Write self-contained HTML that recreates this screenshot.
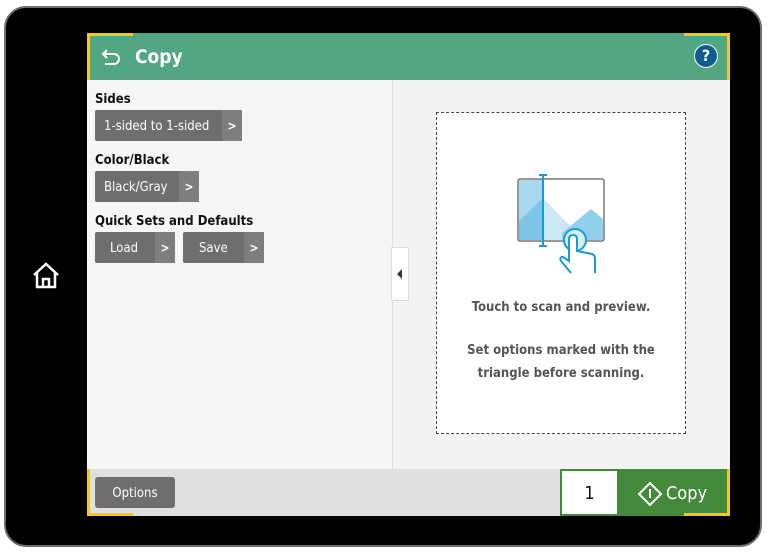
<!DOCTYPE html>
<html><head><style>
*{margin:0;padding:0;box-sizing:border-box}
body{width:768px;height:552px;background:#fff;position:relative;overflow:hidden;font-family:"DejaVu Sans Condensed","Liberation Sans",sans-serif}
.dev{position:absolute;left:4px;top:6px;width:758px;height:541px;background:#000;border-radius:22px;border:2px solid #6a6e72}
.scr{position:absolute;left:87px;top:33px;width:643px;height:483px;background:#f5f5f5;overflow:hidden}
.hdr{position:absolute;left:0;top:0;width:643px;height:47px;background:#52a681}
.hdr .t{position:absolute;left:48px;top:13px;color:#fff;font-size:19px;font-weight:bold}
.lbl{position:absolute;left:8px;font-size:13px;font-weight:bold;color:#111}
.btn{position:absolute;height:31px;background:#6e6e6e;color:#fff;font-size:13px;border-radius:2px;line-height:33px}
.btn .a{position:absolute;right:0;top:0;width:20px;height:31px;background:#7e7e7e;text-align:center;font-weight:bold;font-size:12px}
.y{position:absolute;background:#f5c722}
.pv{position:absolute;left:349px;top:79px;width:250px;height:322px;border:1px dashed #444;background:#fff}
.pv p{position:absolute;width:100%;text-align:center;color:#555;font-weight:bold;font-size:13px;line-height:23px}
</style></head><body>
<div class="dev"></div>
<svg style="position:absolute;left:31px;top:261px" width="30" height="28" viewBox="0 0 30 28"><path d="M3 14 L15 3 L27 14 M6 12 V26 H24 V12 M12 26 V18 H18 V26" fill="none" stroke="#fff" stroke-width="2.5"/></svg>
<div class="scr">
 <div class="hdr">
  <svg style="position:absolute;left:14px;top:15px" width="20" height="18" viewBox="0 0 20 18"><path d="M6 2 L2 6 L6 10 M2 6 H13 A5 5 0 0 1 13 16 H4" fill="none" stroke="#fff" stroke-width="2"/></svg>
  <div class="t">Copy</div>
  <div style="position:absolute;left:607px;top:11px;width:24px;height:24px;border-radius:50%;background:#0e5d8c;border:1.5px solid #fff;color:#fff;font-weight:bold;font-size:16px;text-align:center;line-height:21px">?</div>
 </div>
 <div style="position:absolute;left:0;top:47px;width:305px;height:389px;background:#f6f6f6"></div>
 <div style="position:absolute;left:305px;top:47px;width:338px;height:389px;background:#f3f3f3;border-left:1px solid #ddd"></div>
 <div style="position:absolute;left:304px;top:214px;width:18px;height:54px;background:#fff;border:1px solid #ddd"></div>
 <div style="position:absolute;left:310px;top:236px;width:0;height:0;border-top:5px solid transparent;border-bottom:5px solid transparent;border-right:5px solid #333"></div>
 <div class="lbl" style="top:59px">Sides</div>
 <div class="btn" style="left:8px;top:77px;width:147px;padding-left:9px">1-sided to 1-sided<span class="a">&gt;</span></div>
 <div class="lbl" style="top:120px">Color/Black</div>
 <div class="btn" style="left:8px;top:138px;width:104px;padding-left:9px">Black/Gray<span class="a">&gt;</span></div>
 <div class="lbl" style="top:181px">Quick Sets and Defaults</div>
 <div class="btn" style="left:8px;top:199px;width:80px;padding-left:15px">Load<span class="a">&gt;</span></div>
 <div class="btn" style="left:96px;top:199px;width:81px;padding-left:16px">Save<span class="a">&gt;</span></div>
 <div class="pv">
  <svg style="position:absolute;left:80px;top:60px" width="90" height="102" viewBox="0 0 90 102">
   <rect x="1" y="6" width="86" height="62" rx="2" fill="#fff" stroke="#777" stroke-width="1.5"/>
   <rect x="2" y="7" width="24" height="60" fill="#a8d8ee"/>
   <path d="M26 25 L60 60 L60 67 L26 67Z" fill="#cbe8f4"/>
   <path d="M2 48 L26 25 L26 67 L2 67Z" fill="#7cc6e6"/>
   <path d="M45 60 L74 36 L86 46 L86 67 L45 67Z" fill="#90d0ec"/>
   <path d="M26 2 V73 M22 2 H30 M22 73 H30" stroke="#1a9ad6" stroke-width="2"/>
   <circle cx="58" cy="67" r="11" fill="#d6eef8" stroke="#1a9ad6" stroke-width="2"/>
   <path d="M54 100 L44 88 Q42 84 46 84 L52 88 V66 Q52 62 56 62 Q60 62 60 66 V78 L75 81 Q78 82 78 86 V100" fill="#fff" stroke="#1a9ad6" stroke-width="2"/>
  </svg>
  <p style="top:183px">Touch to scan and preview.</p>
  <p style="top:226px">Set options marked with the<br>triangle before scanning.</p>
 </div>
 <div style="position:absolute;left:0;top:436px;width:643px;height:47px;background:#e0e0e0"></div>
 <div class="btn" style="left:8px;top:444px;width:80px;text-align:center;border-radius:3px">Options</div>
 <div style="position:absolute;left:473px;top:436px;width:170px;height:47px;background:#438a3a"></div>
 <div style="position:absolute;left:475px;top:438px;width:55px;height:43px;background:#fff;text-align:center;line-height:45px;font-size:18px;color:#111">1</div>
 <svg style="position:absolute;left:550px;top:448px" width="26" height="26" viewBox="0 0 26 26"><path d="M13 2 L24 13 L13 24 L2 13Z M13 8 V17" fill="none" stroke="#fff" stroke-width="2"/></svg>
 <div style="position:absolute;left:579px;top:450px;color:#fff;font-size:18px">Copy</div>
 <div class="y" style="left:0;top:0;width:3px;height:47px"></div>
 <div class="y" style="left:0;top:0;width:46px;height:3px"></div>
 <div class="y" style="right:0;top:0;width:3px;height:47px"></div>
 <div class="y" style="right:0;top:0;width:46px;height:3px"></div>
 <div class="y" style="left:0;top:436px;width:3px;height:47px"></div>
 <div class="y" style="left:0;bottom:0;width:46px;height:3px"></div>
 <div class="y" style="right:0;top:436px;width:3px;height:47px"></div>
 <div class="y" style="right:0;bottom:0;width:46px;height:3px"></div>
</div>
</body></html>
